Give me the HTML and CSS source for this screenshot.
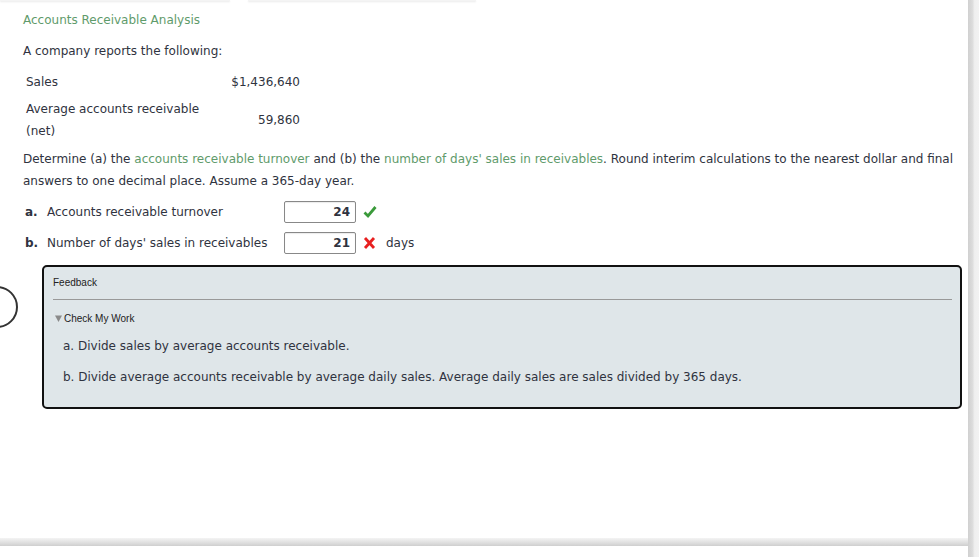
FILE: index.html
```html
<!DOCTYPE html>
<html>
<head>
<meta charset="utf-8">
<link rel="stylesheet" href="styles.css">
</head>
<body>
<div class="frame">
  <div class="main">
    <div class="tabs"><span class="tab t1"></span><span class="tab t2"></span></div>
    <div class="content">
      <div class="title">Accounts Receivable Analysis</div>
      <p class="intro">A company reports the following:</p>
      <table class="data">
        <tr><td class="lbl">Sales</td><td class="val">$1,436,640</td></tr>
        <tr><td class="lbl">Average accounts receivable<br>(net)</td><td class="val">59,860</td></tr>
      </table>
      <p class="task">Determine (a) the <span class="term">accounts receivable turnover</span> and (b) the <span class="term">number of days' sales in receivables</span>. Round interim calculations to the nearest dollar and final answers to one decimal place. Assume a 365-day year.</p>
      <div class="answers">
        <div class="row">
          <span class="letter">a.</span><span class="qlabel">Accounts receivable turnover</span>
          <span class="box">24</span>
          <svg class="mark" width="14" height="14" viewBox="0 0 14 14"><path d="M1.5 7.5 L5 11 L12.5 2" fill="none" stroke="#3a9a3a" stroke-width="2.8"/></svg>
        </div>
        <div class="row">
          <span class="letter">b.</span><span class="qlabel">Number of days' sales in receivables</span>
          <span class="box">21</span>
          <svg class="mark" width="14" height="14" viewBox="0 0 14 14"><path d="M2 2 L11 12 M11 2 L2 12" fill="none" stroke="#e82020" stroke-width="2.8"/></svg>
          <span class="unit">days</span>
        </div>
      </div>
      <div class="feedback-wrap">
        <span class="circle"></span>
        <div class="feedback">
          <div class="fb-head">Feedback</div>
          <div class="fb-rule"></div>
          <div class="cmw"><svg class="tri" width="7" height="7" viewBox="0 0 7 7"><path d="M0 0.5 L7 0.5 L3.5 7 Z" fill="#8a8a8a"/></svg>Check My Work</div>
          <p class="hint">a. Divide sales by average accounts receivable.</p>
          <p class="hint">b. Divide average accounts receivable by average daily sales. Average daily sales are sales divided by 365 days.</p>
        </div>
      </div>
    </div>
    <div class="spacer"></div>
    <div class="bottom-bar"></div>
  </div>
  <div class="scroll"></div>
</div>
</body>
</html>
```

FILE: styles.css
```css
html, body {
  margin: 0;
  padding: 0;
  background: #fff;
}
.frame {
  display: flex;
  width: 979px;
  height: 557px;
  overflow: hidden;
}
.main {
  width: 968px;
  display: flex;
  flex-direction: column;
  height: 557px;
}
.scroll {
  width: 11px;
  height: 557px;
  background: linear-gradient(to right, #d0d0d0, #dcdcdc 40%, #efefef 60%, #f2f2f2);
}
.tabs {
  display: flex;
  height: 2px;
  gap: 18px;
}
.tab {
  display: block;
  height: 1px;
  box-shadow: 0 1px 2px rgba(0,0,0,0.12);
  background: #f4f4f4;
}
.t1 { width: 230px; }
.t2 { width: 228px; }
.content {
  padding: 0 0 0 23px;
  font-family: "DejaVu Sans", Verdana, sans-serif;
  font-size: 12px;
  color: #2f3340;
}
.title {
  color: #5f9b6b;
  font-size: 12px;
  margin-top: 10px;
  line-height: 16px;
}
.intro {
  margin: 15px 0 0 0;
  line-height: 16px;
}
.data {
  border-collapse: collapse;
  margin: 12px 0 0 0;
}
.data td {
  padding: 0 0 0 3px;
  line-height: 22px;
  vertical-align: middle;
}
.data tr:first-child td { padding-bottom: 5px; }
.data .lbl { width: 200px; }
.data .val { text-align: right; width: 71px; }
.task {
  margin: 6px 0 0 0;
  line-height: 22px;
  width: 940px;
}
.term { color: #5f9b6b; }
.answers {
  margin-top: 9px;
  display: flex;
  flex-direction: column;
  gap: 9px;
}
.row {
  display: flex;
  align-items: center;
  height: 22px;
  padding-left: 2px;
}
.letter {
  font-weight: bold;
  width: 22px;
}
.qlabel {
  width: 237px;
}
.box {
  width: 65px;
  height: 20px;
  border: 1px solid #888;
  border-radius: 2px;
  box-shadow: inset 0 1px 1px rgba(0,0,0,0.08);
  text-align: right;
  padding-right: 5px;
  font-weight: bold;
  line-height: 20px;
  background: #fff;
}
.mark {
  margin-left: 7px;
}
.unit {
  margin-left: 9px;
}
.feedback-wrap {
  position: relative;
  margin-top: 11px;
  margin-left: 19px;
}
.circle {
  position: absolute;
  left: -66px;
  top: 21px;
  width: 38px;
  height: 38px;
  border: 2px solid #333;
  border-radius: 50%;
}
.feedback {
  box-sizing: border-box;
  width: 920px;
  border: 2px solid #111;
  border-radius: 5px;
  background: #dfe6e9;
  padding: 8px 8px 22px 9px;
}
.fb-head {
  font-family: "Liberation Sans", Arial, sans-serif;
  font-size: 10px;
  color: #222;
  line-height: 16px;
}
.fb-rule {
  height: 1px;
  background: #999;
  margin-top: 8px;
}
.cmw {
  display: flex;
  align-items: center;
  font-family: "Liberation Sans", Arial, sans-serif;
  font-size: 10px;
  color: #222;
  margin-top: 11px;
  margin-left: 2px;
  height: 14px;
}
.tri {
  margin-right: 2px;
}
.hint {
  margin: 13px 0 0 10px;
  line-height: 16px;
}
.hint + .hint { margin-top: 15px; }
.spacer { flex: 1; }
.bottom-bar {
  height: 8px;
  margin-bottom: 11px;
  background: linear-gradient(to bottom, #f4f4f4, #dedede 60%, #cfcfcf);
}
```
